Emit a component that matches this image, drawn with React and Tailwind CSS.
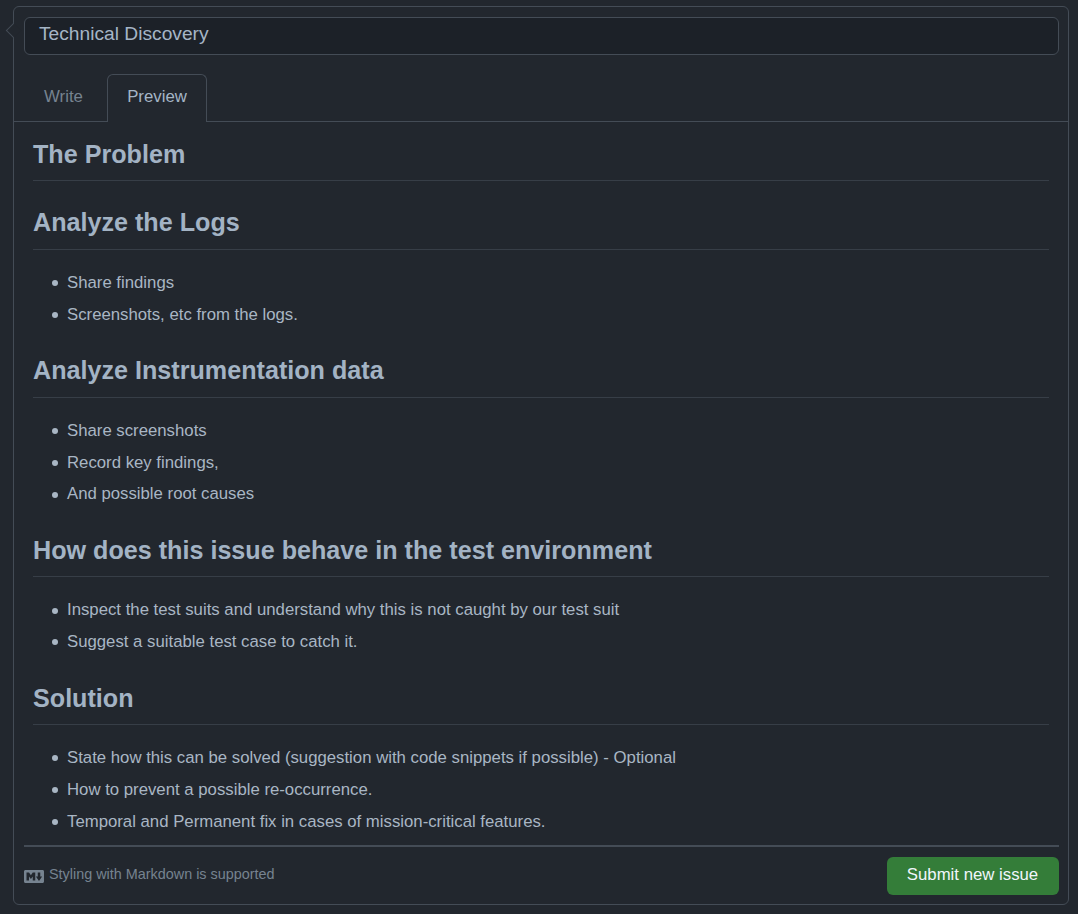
const sections = [
  { title: "The Problem", items: [] },
  { title: "Analyze the Logs", items: ["Share findings", "Screenshots, etc from the logs."] },
  { title: "Analyze Instrumentation data", items: ["Share screenshots", "Record key findings,", "And possible root causes"] },
  { title: "How does this issue behave in the test environment", items: ["Inspect the test suits and understand why this is not caught by our test suit", "Suggest a suitable test case to catch it."] },
  { title: "Solution", items: ["State how this can be solved (suggestion with code snippets if possible) - Optional", "How to prevent a possible re-occurrence.", "Temporal and Permanent fix in cases of mission-critical features."] },
];

function MarkdownIcon() {
  return (
    <svg width="20" height="13" viewBox="0 3 16 10" fill="#768390" className="mt-[3px] shrink-0" preserveAspectRatio="none">
      <path fillRule="evenodd" d="M14.85 3H1.15C.52 3 0 3.52 0 4.15v7.69C0 12.48.52 13 1.15 13h13.69c.64 0 1.15-.52 1.15-1.15v-7.7C16 3.52 15.48 3 14.85 3zM9 11H7V8L5.5 9.92 4 8v3H2V5h2l1.5 2L7 5h2v6zm2.99.5L9.5 8H11V5h2v3h1.5l-2.51 3.5z" />
    </svg>
  );
}

export default function App() {
  return (
    <div className="h-[914px] w-[1078px] overflow-hidden bg-[#22272e] pl-[13px] pr-[9px] pt-[6px] font-['Liberation_Sans',sans-serif] text-[#a9b6c4]">
      <div className="relative flex h-[899px] flex-col rounded-md border border-[#444c56] bg-[#22272e]">
        <div className="absolute left-[-8px] top-[18px] h-[11px] w-[11px] translate-x-[2px] rotate-45 border-b border-l border-[#444c56] bg-[#22272e]" />
        <div className="pl-[10px] pr-[9px] pt-[10px]">
          <div className="flex h-[38px] items-center rounded-md border border-[#444c56] bg-[#1c2128] px-[14px] pb-[4px] text-[19.2px] leading-[26px] text-[#a5b5c6]">
            Technical Discovery
          </div>
        </div>
        <div className="mt-[19px] flex h-[48px] items-end border-b border-[#444c56] pl-[10px]">
          <div className="mr-[5px] flex h-[47px] w-[78px] items-center justify-center pb-[2px] pl-[1px] text-[16.8px] text-[#768390]">Write</div>
          <div className="-mb-px flex h-[48px] w-[100px] items-center justify-center rounded-t-md border border-b-0 border-[#444c56] bg-[#22272e] pb-[4px] text-[16.8px] text-[#a5b5c6]">Preview</div>
        </div>
        <div className="min-h-0 flex-1 overflow-hidden pl-[19px] pr-[19px] pt-[14px]">
          {sections.map((s, i) => (
            <section key={s.title} className={i === 0 ? "" : i === 1 ? "mt-[24px]" : "mt-[25.4px]"}>
              <h2 className={i === 1 || i === 2 ? "border-b border-[#373e47] pb-[8.4px] text-[25.15px] font-bold leading-[35.6px] text-[#a3b3c4]" : "border-b border-[#373e47] pb-[8px] text-[25.15px] font-bold leading-[36px] text-[#a3b3c4]"}>{s.title}</h2>
              {s.items.length > 0 && (
                <ul className="mt-[20.4px] pl-[19px] text-[16.75px] leading-[25.2px]">
                  {s.items.map((t, j) => (
                    <li key={t} className={j === 0 ? "flex items-center" : "mt-[6.5px] flex items-center"}>
                      <span className="mr-[9px] mt-[1px] h-[6px] w-[6px] shrink-0 rounded-full bg-[#a9b6c4]" />
                      {t}
                    </li>
                  ))}
                </ul>
              )}
            </section>
          ))}
        </div>
        <div className="ml-[10px] mr-[9px] flex h-[59px] shrink-0 items-center justify-between border-t-2 border-[#444c56]">
          <div className="flex items-center gap-[5px] text-[14.4px] text-[#768390]">
            <MarkdownIcon />
            <span className="-mt-[2px]">Styling with Markdown is supported</span>
          </div>
          <button className="h-[38px] w-[172px] rounded-md bg-[#347d39] pb-[2px] pr-[1px] text-[16.77px] text-[#f0f6fc]">Submit new issue</button>
        </div>
      </div>
    </div>
  );
}
